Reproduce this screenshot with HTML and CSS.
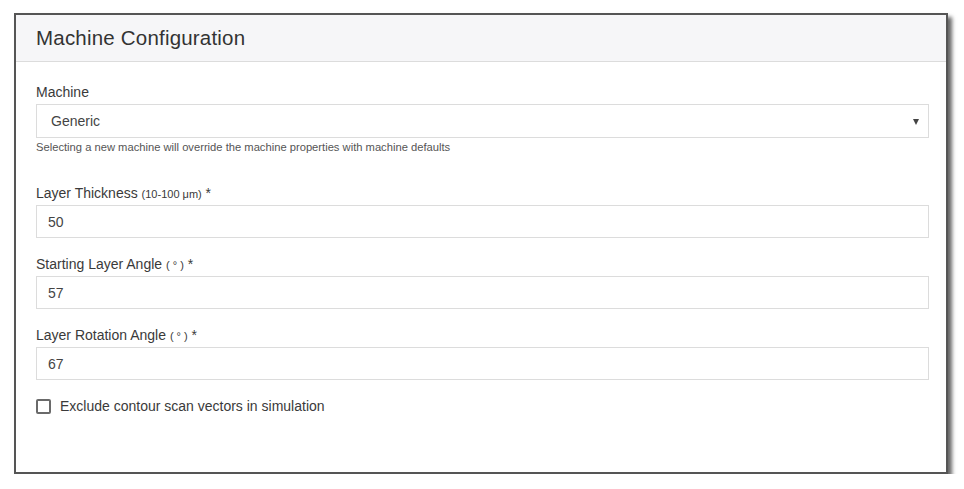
FILE: index.html
```html
<!DOCTYPE html>
<html>
<head>
<meta charset="utf-8">
<link rel="stylesheet" href="styles.css">
</head>
<body>
<div class="frame">
  <div class="header">
    <h1 class="title">Machine Configuration</h1>
  </div>
  <div class="body">
    <div class="group group-machine">
      <div class="label">Machine</div>
      <div class="select">
        <span class="select-value">Generic</span>
        <span class="caret"></span>
      </div>
      <div class="help">Selecting a new machine will override the machine properties with machine defaults</div>
    </div>
    <div class="group">
      <div class="label">Layer Thickness <span class="unit">(10-100 μm)</span> *</div>
      <div class="input">50</div>
    </div>
    <div class="group">
      <div class="label">Starting Layer Angle <span class="unit">( ° )</span> *</div>
      <div class="input">57</div>
    </div>
    <div class="group">
      <div class="label">Layer Rotation Angle <span class="unit">( ° )</span> *</div>
      <div class="input">67</div>
    </div>
    <div class="check-row">
      <span class="checkbox"></span>
      <span class="check-label">Exclude contour scan vectors in simulation</span>
    </div>
  </div>
</div>
</body>
</html>
```
FILE: styles.css
```css
html, body {
  margin: 0;
  padding: 0;
  background: #ffffff;
}
body {
  font-family: "Liberation Sans", Arial, sans-serif;
  color: #333333;
  padding: 13px 0 0 14px;
}
.frame {
  width: 930px;
  height: 457px;
  border: 2px solid #555555;
  background: #ffffff;
  box-shadow: 4px 4px 4px rgba(0, 0, 0, 0.6);
  display: flex;
  flex-direction: column;
}
.header {
  height: 46px;
  background: #f6f6f8;
  border-bottom: 1px solid #dcdcdc;
  display: flex;
  align-items: center;
  padding: 0 20px;
}
.title {
  margin: 0;
  font-weight: normal;
  font-size: 20.5px;
  color: #333333;
  letter-spacing: 0.2px;
}
.body {
  padding: 20px 17px 0 20px;
}
.group {
  margin-bottom: 16px;
}
.group-machine {
  margin-bottom: 29px;
}
.label {
  font-size: 14px;
  line-height: 20px;
  height: 20px;
  margin-bottom: 2px;
  color: #3a3a3a;
}
.unit {
  font-size: 11px;
  line-height: 1;
}
.select, .input {
  box-sizing: border-box;
  height: 33px;
  border: 1px solid #dcdcdc;
  display: flex;
  align-items: center;
  font-size: 14px;
  color: #444444;
}
.input {
  padding-left: 11px;
}
.select {
  height: 34px;
  padding: 0 9px 0 14px;
  justify-content: space-between;
}
.caret {
  width: 0;
  height: 0;
  border-left: 3.5px solid transparent;
  border-right: 3.5px solid transparent;
  border-top: 6px solid #444444;
  margin-top: 1px;
}
.help {
  font-size: 11.2px;
  line-height: 14px;
  color: #555555;
  margin-top: 2px;
}
.check-row {
  display: flex;
  align-items: center;
  height: 20px;
}
.checkbox {
  box-sizing: border-box;
  width: 15px;
  height: 15px;
  border: 2px solid #6a6a6a;
  border-radius: 2px;
  margin-right: 9px;
}
.check-label {
  font-size: 14px;
  color: #3a3a3a;
}
```
